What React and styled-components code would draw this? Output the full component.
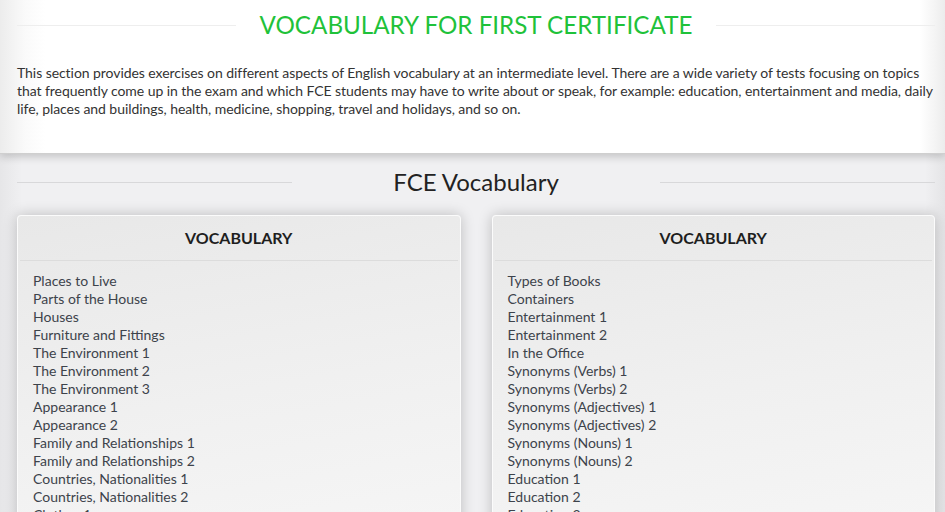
import React from "react";
import styled, { createGlobalStyle } from "styled-components";

const Global = createGlobalStyle`
  html, body { margin: 0; padding: 0; }
  body {
    background: #f0f0f2;
    font-family: Lato, "Open Sans", sans-serif;
    color: #333;
    overflow: hidden;
  }
`;

const Page = styled.div`
  width: 945px;
  height: 512px;
  overflow: hidden;
  background: linear-gradient(to right, #e6e6e8 0, #f0f0f2 22px, #f0f0f2 925px, #e4e4e6 100%);
`;

const Header = styled.header`
  background: linear-gradient(to right, #ececec 0, #fafafa 25px, #fff 45px, #fff 920px, #f4f4f4 935px, #ececec 100%);
  padding: 8px 6px 35px 17px;
  border-bottom: 1px solid #cfcfcf;
  box-shadow: 0 3px 8px rgba(0, 0, 0, 0.18);
  position: relative;
`;

const TitleRow = styled.div`
  display: flex;
  align-items: center;
  gap: 24px;
  margin-right: 4px;
  &::before,
  &::after {
    content: "";
    flex: 1;
    height: 1px;
    background: #eee;
  }
`;

const Title = styled.h1`
  margin: 0;
  font-family: Lato, sans-serif;
  font-weight: 400;
  font-size: 24.2px;
  line-height: 34px;
  color: #1fc23a;
  white-space: nowrap;
`;

const Intro = styled.p`
  margin: 22px 0 0;
  font-size: 14px;
  line-height: 18px;
  letter-spacing: -0.06px;
  color: #333;
`;

const Main = styled.main`
  padding: 14px 10px 0 17px;
`;

const SectionRow = styled.div`
  display: flex;
  align-items: center;
  justify-content: space-between;
  &::before,
  &::after {
    content: "";
    width: 30%;
    height: 1px;
    background: #d8d8da;
  }
`;

const SectionTitle = styled.h2`
  margin: 0;
  font-family: Lato, sans-serif;
  font-weight: 400;
  font-size: 24px;
  line-height: 28px;
  color: #222;
  white-space: nowrap;
`;

const Grid = styled.div`
  display: grid;
  grid-template-columns: 1fr 1fr;
  gap: 31px;
  margin-top: 19px;
`;

const Card = styled.section`
  border: 1px solid #fbfbfb;
  border-radius: 4px;
  background: linear-gradient(170deg, #e8e8e8 0%, #f0f0f0 45%, #f8f8f8 100%);
  box-shadow: 0 0 14px rgba(0, 0, 0, 0.22);
  height: 400px;
`;

const CardHead = styled.div`
  text-align: center;
  font-weight: 700;
  font-size: 16px;
  line-height: 20px;
  color: #1e1e1e;
  padding: 12px 0 12px;
  border-bottom: 1px solid #dcdcdc;
  margin: 0 2px;
`;

const List = styled.ul`
  list-style: none;
  margin: 0;
  padding: 11px 15px;
`;

const Item = styled.li`
  font-size: 14px;
  line-height: 18px;
  color: #3d434b;
`;

const left = [
  "Places to Live",
  "Parts of the House",
  "Houses",
  "Furniture and Fittings",
  "The Environment 1",
  "The Environment 2",
  "The Environment 3",
  "Appearance 1",
  "Appearance 2",
  "Family and Relationships 1",
  "Family and Relationships 2",
  "Countries, Nationalities 1",
  "Countries, Nationalities 2",
  "Clothes 1",
  "Clothes 2",
];

const right = [
  "Types of Books",
  "Containers",
  "Entertainment 1",
  "Entertainment 2",
  "In the Office",
  "Synonyms (Verbs) 1",
  "Synonyms (Verbs) 2",
  "Synonyms (Adjectives) 1",
  "Synonyms (Adjectives) 2",
  "Synonyms (Nouns) 1",
  "Synonyms (Nouns) 2",
  "Education 1",
  "Education 2",
  "Education 3",
  "Health 1",
];

function VocabCard({ items }) {
  return (
    <Card>
      <CardHead>VOCABULARY</CardHead>
      <List>
        {items.map((t) => (
          <Item key={t}>{t}</Item>
        ))}
      </List>
    </Card>
  );
}

export default function App() {
  return (
    <Page>
      <Global />
      <Header>
        <TitleRow>
          <Title>VOCABULARY FOR FIRST CERTIFICATE</Title>
        </TitleRow>
        <Intro>
          This section provides exercises on different aspects of English vocabulary at an
          intermediate level. There are a wide variety of tests focusing on topics that frequently
          come up in the exam and which FCE students may have to write about or speak, for
          example: education, entertainment and media, daily life, places and buildings, health,
          medicine, shopping, travel and holidays, and so on.
        </Intro>
      </Header>
      <Main>
        <SectionRow>
          <SectionTitle>FCE Vocabulary</SectionTitle>
        </SectionRow>
        <Grid>
          <VocabCard items={left} />
          <VocabCard items={right} />
        </Grid>
      </Main>
    </Page>
  );
}
